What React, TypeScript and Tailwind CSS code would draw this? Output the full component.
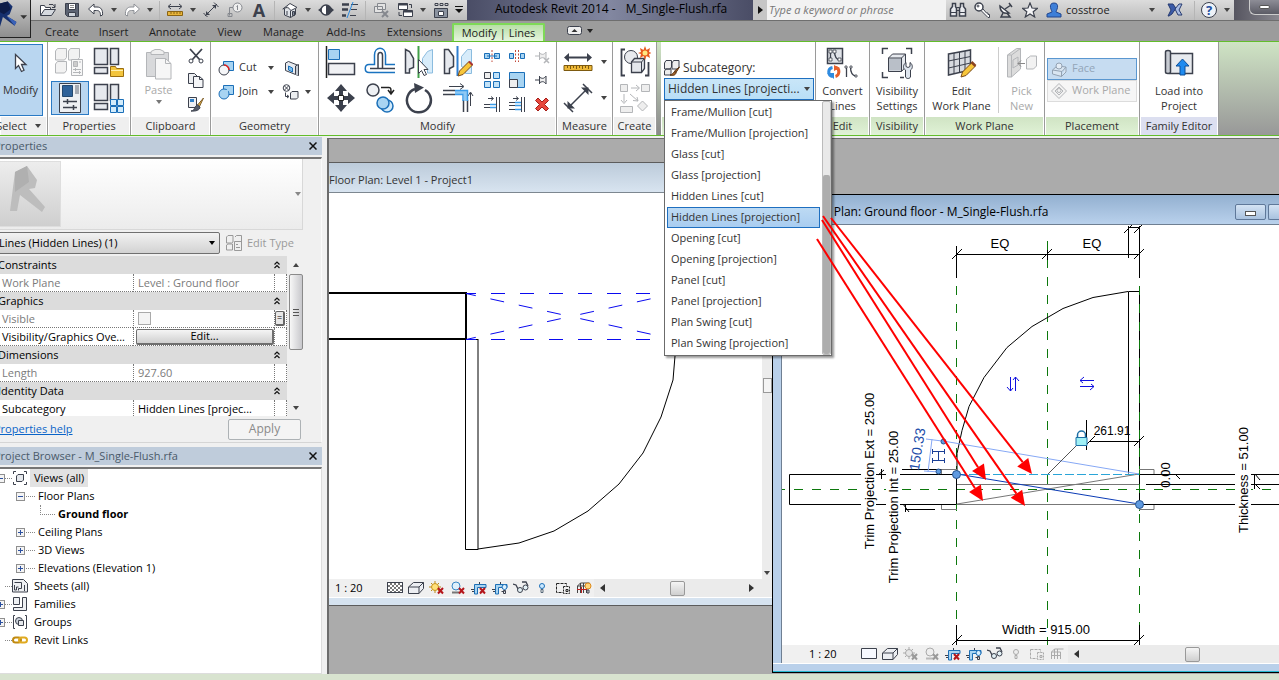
import React from 'react';

type Kids = { children?: React.ReactNode };

const D = '#3c414d';
const L = '#e6e9ee';
const B = '#1b6fb8';
const LB = '#a8d4f2';
const G = '#b4b6b9';

const Svg = ({ w = 16, h = 16, children }: Kids & { w?: number; h?: number }) => (
  <svg width={w} height={h} viewBox={`0 0 ${w} ${h}`} fill="none" stroke={D} className="block shrink-0" aria-hidden="true">
    {children}
  </svg>
);

const Caret = ({ color = '#444' }: { color?: string }) => (
  <svg width="6" height="4" viewBox="0 0 6 4" className="block shrink-0" aria-hidden="true">
    <path d="M0 0h6L3 4z" fill={color} />
  </svg>
);

const IconBtn = ({ label, className = '', children }: Kids & { label: string; className?: string }) => (
  <button type="button" aria-label={label} className={`flex shrink-0 items-center justify-center ${className}`}>
    {children}
  </button>
);

/* ---------- quick access icons ---------- */

const OpenIcon = () => (
  <Svg w={18}>
    <path d="M1.500 13.500v-10h4l1 2h5v2" fill="#fff" />
    <path d="M1.500 13.500l4-6h11l-4 6z" fill="#d5d9df" />
    <path d="M10 2.500h4l2 2.500M16 2v3.500h-3" />
  </Svg>
);
const SaveIcon = () => (
  <Svg>
    <path d="M1.500 1.500h13v13h-11l-2-2z" fill="#5c6372" />
    <path d="M4.500 1.500h7v6h-7z" fill="#fff" />
    <path d="M4.500 10.500h7v4h-7z" fill="#cfd4db" />
    <path d="M6 3.500h4M6 5.500h4" stroke="#888" />
  </Svg>
);
const UndoIcon = ({ gray = false }: { gray?: boolean }) => (
  <svg width="18" height="16" viewBox="0 0 18 16" className={gray ? 'block -scale-x-100' : 'block'} aria-hidden="true">
    <path d="M1.500 7L7 2v3h3c4 0 6 3 5.500 8l-2 1c0-4-1-5.500-4-5.500H7v3.500z" fill="#fff" stroke={gray ? '#8d9096' : D} />
  </svg>
);
const RulerIcon = ({ w = 16 }: { w?: number }) => (
  <Svg w={w} h={w === 16 ? 14 : 20}>
    {w === 16 ? (
      <>
        <path d="M2 3.500h12M4 1L1 3.500 4 6M12 1l3 2.500L12 6" />
        <path d="M.5 8.500h15v4H.5z" fill="#e8b53a" stroke="#8a6414" />
        <path d="M4 9v2M7 9v2M10 9v2M13 9v2" stroke="#8a6414" />
      </>
    ) : (
      <>
        <path d="M3 5.500h24" strokeWidth="2" />
        <path d="M6 1L1 5.500 6 10zM24 1l5 4.500-5 4.500z" fill={D} stroke="none" />
        <path d="M1 13.500h28v5H1z" fill="#edb837" stroke="#7d5a10" />
        <path d="M4.500 14v2M7.500 14v3M10.500 14v2M13.500 14v3M16.500 14v2M19.500 14v3M22.500 14v2M25.500 14v3" stroke="#7d5a10" />
      </>
    )}
  </Svg>
);
const DimIcon = () => (
  <Svg>
    <path d="M2 14L14 2M0.500 11l4 4M11 .5l4.500 4.500" />
    <path d="M3 9v4h4zM9 3h4v4z" fill={D} stroke="none" />
  </Svg>
);
const TagIcon = () => (
  <Svg>
    <circle cx="10.500" cy="5.500" r="4.500" stroke="#85888e" fill="#eee" />
    <path d="M9.500 4.500l1-1V8" stroke="#85888e" />
    <path d="M6 5.500H2.500v8M1 11.500h4v3H1z" stroke="#85888e" />
  </Svg>
);
const HouseIcon = () => (
  <Svg>
    <path d="M2.500 7v6l6 2.500 5-3V7" fill="#dfe3e8" />
    <path d="M.8 7L8 1.500 15 5.500 9 8.500 5.500 5z" fill="#fff" />
    <path d="M8.500 8.500v7M5 9v4" />
    <path d="M10.500 9.500h2v4h-2z" fill="#7d8797" />
  </Svg>
);
const SectionIcon = () => (
  <Svg>
    <circle cx="8" cy="8" r="5" fill="#fff" strokeWidth="1.500" />
    <path d="M3.500 5.500L0 8l3.500 2.500zM12.500 5L16 8l-3.500 3z" fill={D} stroke="none" />
    <path d="M8 3a5 5 0 010 10z" fill={D} stroke="none" />
  </Svg>
);
const ThinLinesIcon = () => (
  <Svg>
    <path d="M0 2.500h7M0 7.500h6M0 13.500h4" strokeWidth="2.500" />
    <path d="M9 2.500h7M9 7.500h6M8 13.500h6" />
    <path d="M11 0L5 16" stroke="#2b8be0" />
  </Svg>
);
const CloseHiddenIcon = () => (
  <Svg>
    <path d="M4.500 1.500h8v6h-8zM1.500 4.500h8v6h-8z" fill="#e3e3e3" stroke="#85888e" />
    <path d="M9 9l6 6M15 9l-6 6" stroke="#85888e" strokeWidth="2" />
  </Svg>
);
const SwitchIcon = () => (
  <Svg>
    <path d="M1.500 1.500h9v6h-9zM6.500 8.500h9v6h-9z" fill="#fff" />
    <path d="M1.500 2.500h9M6.500 9.500h9" strokeWidth="2" />
    <path d="M12 2.500h2.500V6M2 10v3.500h3" />
  </Svg>
);
const UiIcon = () => (
  <Svg>
    <path d="M2 1.500h3v2H2zM7 1.500h3v2H7zM12 1.500h3v2h-3z" />
    <path d="M1.500 6.500h13v9h-13z" fill="#8b93a0" />
    <path d="M5.500 9.500h5v4h-5z" fill="#fff" />
  </Svg>
);

/* ---------- info center icons ---------- */

const Binoculars = () => (
  <Svg w={18}>
    <path d="M3.500 1.500h3v3l1 2v7.500h-6V7l2-2.500zM11.500 1.500h3v3l2 2.500v7h-6V6.500l1-2z" fill="#e8eaee" strokeWidth="1.500" />
    <path d="M7.500 5.500h3v3h-3zM2 10.500h5M11 10.500h5" />
  </Svg>
);
const KeyIcon = () => (
  <Svg>
    <path d="M7 8.500l7 7h1.500v-3H14v-1.500h-1.500L9 7" fill="#fff" />
    <circle cx="5" cy="5" r="4" fill="#fff" strokeWidth="1.500" />
    <circle cx="4" cy="4" r="1" />
  </Svg>
);
const DishIcon = () => (
  <Svg>
    <path d="M2 4c0 6 4 8 9 7z" fill="#fff" strokeWidth="1.500" />
    <path d="M7 7l6-4M11 1l3 4M5 11l-2 4h9l-3-4" strokeWidth="1.500" />
  </Svg>
);
const StarIcon = () => (
  <Svg>
    <path d="M8 1l2 5 5.500.3-4.300 3.500 1.500 5.200L8 12l-4.700 3 1.500-5.200L.5 6.300 6 6z" fill="#f4f4f6" strokeWidth="1.200" />
  </Svg>
);
const UserIcon = () => (
  <Svg>
    <path d="M8 1c3 0 4 2 3.500 4.500C11 8 10 9 10 10l5 2v3H1v-3l5-2c0-1-1-2-1.500-4.500C4 3 5 1 8 1z" fill="#3e7fd8" stroke="#22468e" />
  </Svg>
);
const ExchangeIcon = () => (
  <Svg>
    <path d="M1 2h5l3 4.500L7 9 5 12l-3 2H1l3-6z" fill="#3a5aa8" stroke="#263a70" />
    <path d="M15 2h-3L8 7l3 6h4l-3-5z" fill="#a9bce4" stroke="#263a70" />
  </Svg>
);
const HelpIcon = () => (
  <svg width="18" height="18" viewBox="0 0 18 18" aria-hidden="true">
    <circle cx="9" cy="9" r="7.500" fill="#eef2f8" stroke={D} />
    <text x="9" y="13.500" textAnchor="middle" fontSize="13" fontWeight="700" fill="#1f4fa0">?</text>
  </svg>
);

/* ---------- ribbon icons ---------- */

const CursorIcon = () => (
  <Svg w={14} h={20}>
    <path d="M1.500 1.500v14l3-3 3 6 2.500-1.200L7.500 11.500h4.500z" fill="#fff" strokeWidth="1.300" />
  </Svg>
);
const TypePropsIcon = () => (
  <Svg w={32} h={30}>
    <path d="M1.500 4l2-2.500h9v9l-2 2.500h-9zM14.500 4l2-2.500h9v9l-2 2.500h-9zM1.500 17l2-2.500h9v9l-2 2.500h-9z" fill="#f2f2f2" stroke={G} />
    <path d="M17.500 12.500h11v16h-11z" fill="#f7f7f7" stroke={G} />
    <path d="M19.500 14.500h4v5h-4z" fill="#ccc" stroke={G} />
    <path d="M25 15h2M19 22.500h8M19 25.500h8M21.500 21v3M25.500 24v3" stroke={G} />
  </Svg>
);
const PropsIcon = () => (
  <Svg w={24} h={32}>
    <path d="M1.500 1.500h21v29h-21z" fill="#eef0f3" />
    <path d="M4.500 3.500h10v11h-10z" fill="#2f6299" stroke="#24496f" />
    <path d="M17 3h4v9h-4z" fill="#a6abb3" stroke="none" />
    <path d="M5 19.500h14M5 25.500h14M9.500 17v5M15.500 23v5" strokeWidth="1.500" />
  </Svg>
);
const Quad = () => (
  <path d="M1.500 1.500h13v16h-13zM17.500 1.500h8v16h-8zM1.500 20.500h13v6h-13z" fill={L} strokeWidth="1.500" />
);
const FamilyFolderIcon = () => (
  <Svg w={32} h={31}>
    <Quad />
    <path d="M17.500 19.500h5l1 2h7v8h-13z" fill="#f3c53d" stroke="#9a6d10" />
    <path d="M18 23.500h12" stroke="#fff0b0" />
  </Svg>
);
const FamilyTypesIcon = () => (
  <Svg w={32} h={31}>
    <Quad />
    <path d="M17.500 16.500h6v6h-6zM24.500 16.500h6v6h-6zM17.500 23.500h6v6h-6zM24.500 23.500h6v6h-6z" fill="#d3ecfb" stroke={B} />
  </Svg>
);
const PasteIcon = () => (
  <Svg w={28} h={32}>
    <path d="M1.500 4.500h22v24h-22z" fill="#d8d9db" stroke={G} />
    <path d="M6 6.500v-3l4-2h5l4 2v3z" fill="#eee" stroke={G} />
    <path d="M10.500 10.500h10l5.500 5v15.500H10.500z" fill="#f6f6f6" stroke={G} />
    <path d="M20.500 10.500v5H26" stroke={G} />
  </Svg>
);
const CutIcon = () => (
  <Svg>
    <path d="M2 1l10 11M14 1L4 12" strokeWidth="1.800" />
    <circle cx="3" cy="13" r="2" fill="#fff" />
    <circle cx="13" cy="13" r="2" fill="#fff" />
  </Svg>
);
const CopyIcon = () => (
  <Svg>
    <path d="M.5 1.500h6l3 3v7h-9z" fill="#eceef1" />
    <path d="M5.500 4.500h6l3.500 3v8H5.500z" fill="#f5f6f8" />
    <path d="M11.500 4.500v3H15" />
  </Svg>
);
const MatchIcon = () => (
  <Svg>
    <path d="M.5 1.500h8v10h-8z" fill="#eef0f3" />
    <path d="M2 3h4v3H2z" fill="#2f80c8" stroke="none" />
    <path d="M15.500 2l-6 7 2 1.500z" fill="#e0b04a" stroke="#80602a" />
    <path d="M3 15c4 0 3-5 6.500-6l2.500 2c0 3-4 4.500-9 4z" fill="#555b68" />
  </Svg>
);
const CutGeomIcon = () => (
  <Svg>
    <path d="M5.500 1.500h10v9h-10z" fill={LB} stroke={B} />
    <circle cx="6" cy="10" r="5" fill="#f5f6f8" stroke={D} />
    <path d="M6 5a5 5 0 015 5" stroke="#e02020" strokeWidth="1.500" />
  </Svg>
);
const JoinGeomIcon = () => (
  <Svg>
    <path d="M5.500 1.500h10v9h-10z" fill={LB} stroke={B} />
    <circle cx="6" cy="10" r="5" fill={LB} stroke={B} />
    <path d="M6 6h4v4H6z" fill={LB} stroke="none" />
  </Svg>
);
const WallOpeningIcon = () => (
  <Svg>
    <path d="M1.500 3l3-1.500 10 4v10l-3-1-10-4z" fill={L} />
    <path d="M11.500 14.500V6l3-1.500v11" fill="#c3c9d1" />
    <path d="M4.500 6l4 2v4l-4-2z" fill="#7cc0f0" stroke={B} />
  </Svg>
);
const PaintIcon = () => (
  <Svg w={18}>
    <circle cx="4.500" cy="4" r="3.300" />
    <path d="M2.500 2l4 4M6.500 2l-4 4M3.500 8.500v4h3M5 11l2 1.500L5 14" />
    <path d="M8.500 9l1.500-1.500h6v6L14.500 15h-6z" fill="#eceef1" />
  </Svg>
);
const AlignIcon = () => (
  <Svg w={31} h={32}>
    <path d="M1.500 0v32" stroke="#222" strokeWidth="1.500" />
    <path d="M3.500 3.500h11v10h-11z" fill={LB} stroke={B} />
    <path d="M3.500 17.500h26v11h-26z" fill="#f0f1f4" strokeWidth="1.500" />
  </Svg>
);
const OffsetIcon = () => (
  <Svg w={32} h={32}>
    <path d="M31 26.500H5c-5 0-5-8 0-8h5.500V9c0-9 11-9 11 0v9.500H31" stroke="#1a73c0" strokeWidth="1.500" />
    <path d="M31 22.500H6M14 22V9.500c0-4 4.500-4 4.500 0V22" strokeWidth="1.500" />
  </Svg>
);
const MirrorPickIcon = () => (
  <Svg w={30} h={32}>
    <path d="M1.500 3.500l4 2 4 7v9l-4 1.500v4h-4z" fill={L} strokeWidth="1.500" />
    <path d="M28.500 3.500l-5 2-5 7v9l5 1.500v4h5z" fill="#d7ecfa" stroke="#8bbcdf" />
    <path d="M14.500 0v32" stroke="#41a048" strokeWidth="2" />
    <path d="M14.500 13.500v14l3-3 2.500 5 2.500-1-2.500-5h4z" fill="#fff" />
  </Svg>
);
const MirrorDrawIcon = () => (
  <Svg w={30} h={32}>
    <path d="M1.500 3.500h4l5 7v10l-4 2v5h-5z" fill={L} strokeWidth="1.500" />
    <path d="M28.500 3.500h-4l-6 7v10l4 2v5h6z" fill="#d7ecfa" stroke="#8bbcdf" />
    <path d="M14.500 0v30" stroke="#2f7fd0" strokeWidth="2" />
    <path d="M15 30l1.500-5L26 15.500l3.500 3.500L20 28.500z" fill="#f7c63a" stroke="#7b4a18" />
    <path d="M26 15.500l3.500 3.500" stroke="#a33" strokeWidth="2" />
  </Svg>
);
const MoveIcon = () => (
  <Svg w={32} h={32}>
    <path d="M16 2l6 7h-4v5h-4V9h-4zM16 30l6-7h-4v-5h-4v5h-4zM2 16l7-6v4h5v4H9v4zM30 16l-7-6v4h-5v4h5v4z" fill={D} stroke="none" />
    <path d="M13.500 13.500h5v5h-5z" fill="#fff" stroke="#222" />
  </Svg>
);
const CopyRoundIcon = () => (
  <Svg w={30} h={32}>
    <circle cx="8" cy="8" r="6" fill="#eef0f3" strokeWidth="1.500" />
    <path d="M16 5.500h8c2 0 2 1 2 6M23 8l3 4 3-4" stroke="#222" strokeWidth="1.500" />
    <circle cx="22" cy="24" r="6" fill="#d3ebfb" stroke={B} strokeWidth="1.500" />
    <circle cx="18" cy="21" r="6" fill={LB} stroke={B} strokeWidth="1.500" />
  </Svg>
);
const RotateIcon = () => (
  <Svg w={28} h={32}>
    <path d="M20 8a12 12 0 11-10-1" strokeWidth="2.500" />
    <path d="M9 1l10 4.500L10 11z" fill={D} stroke="none" />
  </Svg>
);
const TrimIcon = () => (
  <Svg w={32} h={32}>
    <path d="M7 4.500h14M18 1.500l4 3-4 3M28.500 24V11M26 14l2.500-4 2.500 4" />
    <path d="M1 8.500h12M1 12.500h12M21.500 30V18M25.500 30V18" strokeWidth="1.500" />
    <path d="M13 10.500h10.500V19" stroke="#8fc9f4" strokeWidth="3" />
    <path d="M13 8.500h12.500V19M13 12.500h8V19" stroke="#3a9be8" strokeWidth="1.500" />
  </Svg>
);
const SplitIcon = ({ gap = false }: { gap?: boolean }) => (
  <Svg>
    <path d={gap ? 'M.5 5.500h4v5h-4zM11.500 5.500h4v5h-4z' : 'M.5 5.500h5v5h-5zM10.500 5.500h5v5h-5z'} fill={LB} stroke={B} />
    <path d={gap ? 'M6.500 2v12M9.500 2v12' : 'M8 2v12'} stroke="#c24a3a" strokeDasharray="2 1.500" />
    {!gap && <path d="M3 8h10" stroke={B} />}
  </Svg>
);
const PinIcon = ({ gray = false }: { gray?: boolean }) => (
  <Svg>
    <path d="M1 8h4M5.500 4v8M6 5.500c3 1.500 4 1 6-1.500v8c-2-2.500-3-3-6-1.500" stroke={gray ? G : D} fill="#eee" />
    {gray && <path d="M10 10l5 5M15 10l-5 5" stroke={G} strokeWidth="1.500" />}
  </Svg>
);
const ArrayIcon = () => (
  <Svg>
    <path d="M.5.500h6v6h-6z" fill="#eee" />
    <path d="M9.500.500h6v6h-6zM.5 9.500h6v6h-6zM9.500 9.500h6v6h-6z" fill="#c2e2f8" stroke={B} />
  </Svg>
);
const ScaleIcon = () => (
  <Svg>
    <path d="M.5.500h15v15H.5z" fill={LB} stroke={B} />
    <path d="M.5 7.500h8v8h-8z" fill="#eee" />
  </Svg>
);
const TrimOneIcon = ({ multi = false }: { multi?: boolean }) => (
  <Svg>
    <path d="M4 2.500h5M7 .5l2.500 2L7 4.500" />
    <path d={multi ? 'M0 6.500h7M0 9.500h7M0 13.500h7' : 'M0 8.500h7M0 11.500h7'} />
    <path d={multi ? 'M6 6.500h6M6 9.500h6M6 13.500h6' : 'M6 8.500h6M6 11.500h6'} stroke="#3a9be8" strokeWidth="1.500" />
    <path d="M12.500 1v15M15.500 1v15" />
  </Svg>
);
const DeleteIcon = () => (
  <Svg>
    <path d="M4 2l4 4 4-4 2.500 2.500L10.500 8.500l4 4L12 15l-4-4-4 4-2.500-2.500 4-4-4-4z" fill="#e8473c" stroke="#a51d17" />
  </Svg>
);
const MeasureLineIcon = () => (
  <Svg w={30} h={30}>
    <path d="M5 25L25 5M1 20l9 9M20 1l9 9" strokeWidth="1.500" />
    <path d="M4.500 18v7.500H12zM18 4.500h7.500V12z" fill={D} stroke="none" />
  </Svg>
);
const CreateSimilarIcon = () => (
  <Svg w={32} h={32}>
    <path d="M6 3.500H2.500v26H6M26 29.500h3.500V16" strokeWidth="1.800" />
    <circle cx="12" cy="11" r="6.500" fill="#e8eaee" />
    <path d="M12.500 16l3-3.500h10v10l-3 4h-10z" fill="#e4e7ec" strokeWidth="1.300" />
    <path d="M12.500 16h10v10.500M22.500 16l3-3.500" />
    <path d="M26 0l1.500 4L31 2l-1 4 3 1-3 1 1 4-3.500-2L26 14l-1.500-4L21 12l1-4-3-1 3-1-1-4 3.500 2z" fill="#e8591c" stroke="none" />
    <circle cx="26" cy="7" r="2.500" fill="#ffe680" stroke="none" />
  </Svg>
);
const AssemblyIcon = () => (
  <Svg w={32} h={30}>
    <path d="M1.500 1.500h7v7h-7zM22.500 1.500h8v7h-8zM1.500 23.500h12v6h-12zM23.500 18l5 5-5 5-5-5z" fill="#eee" stroke={G} />
    <path d="M12 5h8M17 2l3.500 3L17 8M5 11v8M2 17l3 3.500L8 17M11 11l8 7M18 14l1 4-5-.5" stroke={G} />
  </Svg>
);
const SubcatIcon = () => (
  <Svg>
    <path d="M.5 3L2 .5h5.500V7L6 9H.5zM8 3L9.500.500H15V7L13.500 9H8zM.5 11L2 9h5v6H.5z" fill="#eee" />
    <path d="M15.500 7l-5 4 1.500 1.500zM6 15c3 0 3-3 5-3.500l1 1C12 15 9 16 6 15z" fill="#a4632c" stroke="#5c3512" />
  </Svg>
);
const ConvertIcon = () => (
  <Svg w={32} h={32}>
    <path d="M1.500 1.500h15v15h-15z" fill="#e0e3e8" strokeWidth="1.500" />
    <path d="M4.500 4v9M8.500 4c0 5 1 8 5 9M20.500 20v10M24.500 20c0 5 1 8 5 9" strokeWidth="1.300" />
    <path d="M3 3h3v3H3zM7 3h3v3H7zM3 11h3v3H3zM12 11h3v3h-3zM19 19h2v2h-2zM24 19h2v2h-2zM29 28h2v2h-2z" fill="#fff" strokeWidth=".8" />
    <path d="M6.500 20.500c-5 1-5 8 0 9" stroke="#2f8be0" strokeWidth="3" />
    <path d="M9.500 20.500c5 1 4 8 0 9" stroke="#e8602a" strokeWidth="3" />
    <path d="M1 26h7v6z" fill="#2f8be0" stroke="none" />
    <path d="M8 18v6l6-3z" fill="#e8602a" stroke="none" />
  </Svg>
);
const VisibilityIcon = () => (
  <Svg w={32} h={32}>
    <path d="M7 1.500H1.500V7M25 1.500h5.500V7M7 30.500H1.500V25M19 30.500h4" strokeWidth="1.500" />
    <path d="M7.500 11l4-4h13v13l-4 4.500h-13z" fill={L} />
    <path d="M8 11.500h12v12H8z" fill="#b9bfc8" stroke="none" />
    <path d="M7.500 11h13v13.500M20.500 11l4-4" />
    <path d="M25 15.500v4l2 1 2-1v-4c3 2 3 6 .5 7.500v7c-1 2-4 2-5 0v-7c-3-1.500-2.500-5.500.5-7.500z" fill="#dfe6ef" />
  </Svg>
);
const EditPlaneIcon = () => (
  <Svg w={32} h={32}>
    <path d="M2.500 7l22-4v20l-22 5z" fill="#d8dbe0" strokeWidth="1.500" />
    <path d="M8 6v21M13.500 5v20.500M19 4v20M2.500 14l22-4.500M2.500 21l22-5" />
    <path d="M15 30l1.500-5L26 15.500l3.500 3.500L20 28.500z" fill="#f7c63a" stroke="#7b4a18" />
    <path d="M25.500 15l4 4" stroke="#8a4320" strokeWidth="2.500" />
  </Svg>
);
const PickNewIcon = () => (
  <Svg w={32} h={32}>
    <path d="M1.500 8l9-6.500h4V22l-9 8h-4z" fill="#dcdcdc" stroke={G} />
    <path d="M5.500 8l9-6.500M1.500 8h4v22M7 13l5-3v8l-5 3z" stroke={G} />
    <path d="M12 16.500h7M15 13.500l-3 3 3 3" stroke="#888" />
    <path d="M20.500 12l4-3h6v10l-3 3h-7z" fill="#f2f2f2" stroke={G} />
  </Svg>
);
const FaceIcon = () => (
  <Svg>
    <path d="M1.500 9L6 5l9 1-4 4.500zM1.500 9v4l9 2.500v-5M15 6v5l-4.500 4.500" stroke="#93a2b3" fill="#d9e6f2" />
    <circle cx="8" cy="5" r="3" stroke="#93a2b3" fill="#e4edf6" />
  </Svg>
);
const PlaneIcon = () => (
  <Svg>
    <path d="M8 .5L15.500 8 8 15.500.5 8z" fill="#f2f2f2" stroke={G} />
    <path d="M8 4l4 4-4 4-4-4z" stroke={G} />
    <circle cx="8" cy="7.500" r="2" stroke={G} />
  </Svg>
);
const LoadIcon = () => (
  <Svg w={30} h={28}>
    <path d="M5.500 4.500h23v20h-23z" fill="#e7eaee" strokeWidth="1.500" />
    <path d="M1.500 3c0-2 5-2 5 0v20c0 2-5 2-5 0z" fill="#c7cbd2" strokeWidth="1.500" />
    <path d="M18.500 10l6.500 7h-4v9h-5v-9h-4z" fill="#1f8bf0" stroke="#0d4f99" />
  </Svg>
);

/* ---------- view control bar icons ---------- */

const BoxIcon = ({ hatch = false }: { hatch?: boolean }) => (
  <Svg h={14}>
    <path d="M.5 1.500h15v10H.5z" fill={hatch ? '#777' : '#f7f9ff'} />
    {hatch && (
      <>
        <path d="M1 3h14M1 7h14M1 11h14" stroke="#fff" strokeDasharray="2 2" strokeWidth="2" />
        <path d="M3 5h12M3 9h12" stroke="#fff" strokeDasharray="2 2" strokeWidth="2" />
        <path d="M.5 1.500h15v10H.5z" />
      </>
    )}
  </Svg>
);
const CubeIcon = () => (
  <Svg h={14}>
    <path d="M.5 6l5-4.500h10v6L11 12.500H.5z" fill="#eceef2" />
    <path d="M.5 6H11v6.500M11 6l4.500-4.500" />
  </Svg>
);
const RedX = ({ gray = false }: { gray?: boolean }) => (
  <path d="M9 7l5 5.500M14 7l-5 5.500" stroke={gray ? '#999' : '#b5161b'} strokeWidth="2" />
);
const SunIcon = ({ gray = false }: { gray?: boolean }) => (
  <Svg h={14}>
    <path d="M6 0v12M0 6h12M2 2l8 8M10 2l-8 8" stroke={gray ? '#aaa' : '#b98a1b'} />
    <circle cx="6" cy="6" r="3.500" fill={gray ? '#e5e5e5' : '#ffe07a'} stroke={gray ? '#aaa' : '#c9951e'} />
    <RedX gray={gray} />
  </Svg>
);
const ShadowIcon = ({ gray = false }: { gray?: boolean }) => (
  <Svg h={14}>
    <circle cx="6" cy="5" r="4" fill={gray ? '#eee' : '#dff0fb'} stroke={gray ? '#aaa' : '#3a86c4'} />
    <path d="M2 11.500h7" stroke={gray ? '#bbb' : '#777'} strokeWidth="2" />
    <RedX gray={gray} />
  </Svg>
);
const CropIcon = ({ bulb = false }: { bulb?: boolean }) => (
  <Svg h={14}>
    <path d="M3.500 13V3.500H15v3H6.500V13z" fill={LB} stroke="#1d6fb5" />
    <path d="M0 8.500h3M1 10.500h2M8.500 1v2M9.500 10.500h3" />
    {bulb ? (
      <>
        <circle cx="12.500" cy="6" r="2.500" fill="#d9f0ff" stroke={B} />
        <path d="M11.500 9.500h2v3h-2z" />
      </>
    ) : (
      <RedX />
    )}
  </Svg>
);
const GlassesIcon = () => (
  <Svg h={14}>
    <path d="M0 3l3 1 3 6M9 1h4l2 4" strokeWidth="1.300" />
    <circle cx="7" cy="9" r="2.500" fill="#e4f1f6" />
    <circle cx="12.500" cy="6.500" r="2.500" fill="#e4f1f6" />
  </Svg>
);
const BulbIcon = ({ gray = false }: { gray?: boolean }) => (
  <Svg h={14}>
    <circle cx="8" cy="5" r="2.500" fill={gray ? '#eee' : '#cbe9ff'} stroke={gray ? '#aaa' : B} />
    <path d="M7 8.500h2v3H7z" stroke={gray ? '#aaa' : '#567'} />
  </Svg>
);
const TempViewIcon = ({ gray = false }: { gray?: boolean }) => (
  <Svg h={14}>
    <path d="M1.500 2.500h10v9h-10z" stroke={gray ? '#aaa' : '#222'} strokeDasharray="3 1" />
    <path d="M8.500 5.500h6v7h-6z" fill="#eee" stroke={gray ? '#aaa' : '#222'} strokeDasharray="2 1" />
    <path d="M11 8.500h2v2h-2z" stroke={gray ? '#aaa' : '#222'} />
  </Svg>
);
const AnalyticIcon = ({ gray = false }: { gray?: boolean }) => (
  <Svg h={14}>
    <path d="M1.500 12V5l3-3h9M1.500 5h9v7M4.500 12V2M7.500 12V2M1 8.500h10" stroke={gray ? '#aaa' : '#444'} />
    {!gray && (
      <>
        <path d="M1 8.500h10M5.500 6v6" stroke="#c02020" />
        <circle cx="12" cy="5" r="3" fill="#ffd57a" stroke="#dd8a1b" />
        <path d="M11 9h2v3h-2z" />
      </>
    )}
  </Svg>
);

/* ---------- header ---------- */

const Sep = () => (
  <span className="flex w-[7px] shrink-0 justify-center">
    <span className="h-[19px] w-px bg-[#b5b5b5]" />
  </span>
);

const QuickAccess = () => (
  <div className="flex shrink-0 items-center bg-linear-to-b from-[#dcdcdc] to-[#bdbdbd] pr-[2px] pl-9">
    <IconBtn label="Open" className="w-6"><OpenIcon /></IconBtn>
    <IconBtn label="Save" className="w-6"><SaveIcon /></IconBtn>
    <IconBtn label="Undo" className="w-6"><UndoIcon /></IconBtn>
    <IconBtn label="Undo list" className="w-3"><Caret /></IconBtn>
    <IconBtn label="Redo" className="w-6"><UndoIcon gray /></IconBtn>
    <IconBtn label="Redo list" className="w-3"><Caret /></IconBtn>
    <Sep />
    <IconBtn label="Measure" className="w-6"><RulerIcon /></IconBtn>
    <IconBtn label="Measure options" className="w-3"><Caret /></IconBtn>
    <IconBtn label="Aligned dimension" className="w-6"><DimIcon /></IconBtn>
    <IconBtn label="Tag by category" className="w-6"><TagIcon /></IconBtn>
    <IconBtn label="Text" className="w-6 text-[18px] leading-5 font-bold text-[#3c414d]">A</IconBtn>
    <Sep />
    <IconBtn label="Default 3D view" className="w-6"><HouseIcon /></IconBtn>
    <IconBtn label="3D view options" className="w-3"><Caret /></IconBtn>
    <IconBtn label="Section" className="w-6"><SectionIcon /></IconBtn>
    <IconBtn label="Thin lines" className="w-6"><ThinLinesIcon /></IconBtn>
    <Sep />
    <IconBtn label="Close hidden windows" className="w-6"><CloseHiddenIcon /></IconBtn>
    <IconBtn label="Switch windows" className="w-6"><SwitchIcon /></IconBtn>
    <IconBtn label="Window list" className="w-3"><Caret /></IconBtn>
    <IconBtn label="User interface" className="w-6"><UiIcon /></IconBtn>
    <IconBtn label="Customize" className="w-3">
      <Svg w={8} h={8}>
        <path d="M0 .5h8" stroke="#111" />
        <path d="M0 3h8L4 7z" fill="#111" stroke="none" />
      </Svg>
    </IconBtn>
  </div>
);

const InfoCenter = () => (
  <div className="flex w-[288px] shrink-0 items-center bg-linear-to-b from-[#dcdcdc] to-[#bdbdbd]">
    <IconBtn label="Search" className="w-6"><Binoculars /></IconBtn>
    <IconBtn label="Subscription" className="w-6"><KeyIcon /></IconBtn>
    <IconBtn label="Communication" className="w-6"><DishIcon /></IconBtn>
    <IconBtn label="Favorites" className="w-6"><StarIcon /></IconBtn>
    <button type="button" className="flex flex-1 items-center gap-1 pr-1 pl-1 text-[#222]">
      <UserIcon />
      <span className="flex-1 text-left">cosstroe</span>
      <Caret />
    </button>
    <IconBtn label="Exchange apps" className="w-8"><ExchangeIcon /></IconBtn>
    <Sep />
    <IconBtn label="Help" className="w-[22px]"><HelpIcon /></IconBtn>
    <IconBtn label="Help menu" className="w-[14px]"><Caret /></IconBtn>
  </div>
);

const TitleBar = () => (
  <div className="flex h-[21px] border-b border-[#6e6e6e]">
    <QuickAccess />
    <div className="flex min-w-0 flex-1 items-center gap-[10px] overflow-hidden bg-linear-to-r from-[#4a4d66] via-[#8287a0] to-[#4a4d66] pb-[3px] pl-7 text-[12px] whitespace-nowrap text-black">
      <span>Autodesk Revit 2014 -</span>
      <span>M_Single-Flush.rfa</span>
    </div>
    <IconBtn label="Collapse search" className="w-[14px] bg-[#c6c6c6]">
      <Svg w={5} h={8}><path d="M0 0l5 4-5 4z" fill="#111" stroke="none" /></Svg>
    </IconBtn>
    <input
      aria-label="Search"
      placeholder="Type a keyword or phrase"
      className="w-[179px] shrink-0 bg-[#f2f2f2] px-[2px] text-[11px] italic outline-none placeholder:text-[#777]"
    />
    <InfoCenter />
    <div className="flex w-[45px] shrink-0 justify-end bg-linear-to-r from-[#565560] to-[#8a8990]">
      <button type="button" aria-label="Minimize" className="flex h-[15px] w-[30px] items-center justify-center rounded-bl-md border border-t-0 border-r-0 border-[#ccc] bg-linear-to-b from-[#8d8d96] to-[#5c5c66]">
        <span className="h-1 w-[11px] rounded-xs border border-[#555] bg-white" />
      </button>
    </div>
  </div>
);

const tabs = [
  { name: 'Create', width: 'w-[54px]' },
  { name: 'Insert', width: 'w-[49px]' },
  { name: 'Annotate', width: 'w-[69px]' },
  { name: 'View', width: 'w-[45px]' },
  { name: 'Manage', width: 'w-[63px]' },
  { name: 'Add-Ins', width: 'w-[62px]' },
  { name: 'Extensions', width: 'w-[75px]' },
];

const TabRow = () => (
  <nav className="flex h-5 items-end bg-[#9c9c9c] pl-[35px] text-[#222]">
    {tabs.map((t) => (
      <button key={t.name} type="button" className={`h-[18px] shrink-0 text-center ${t.width}`}>
        {t.name}
      </button>
    ))}
    <button type="button" className="h-[18px] w-[93px] shrink-0 rounded-t-xs border-2 border-b-0 border-[#7ed957] bg-linear-to-b from-[#b8dfa6] to-[#e6f5de] leading-4">
      Modify | Lines
    </button>
    <button type="button" aria-label="Ribbon display" className="ml-[22px] flex h-5 items-center gap-1">
      <Svg w={16} h={10}>
        <rect x=".5" y=".5" width="14" height="8" rx="2" fill="#eee" />
        <path d="M4.500 6h6l-3-3z" fill="#333" stroke="none" />
      </Svg>
      <Caret color="#222" />
    </button>
  </nav>
);

/* ---------- ribbon ---------- */

const Panel = ({ title, width, tone = 'bg-[#efefef]', children }: Kids & { title: React.ReactNode; width: string; tone?: string }) => (
  <section className={`flex shrink-0 flex-col border-r border-[#9a9a9a] bg-white ${width}`}>
    <div className="flex flex-1 items-center justify-center">{children}</div>
    <div className={`mx-px flex h-[18px] items-center justify-center gap-2 leading-4 whitespace-nowrap ${tone}`}>{title}</div>
  </section>
);

const green = 'bg-linear-to-b from-[#d0e4c4] to-[#e0f2d6]';

const BigBtn = ({ icon, lines, gray = false }: { icon: React.ReactNode; lines: string[]; gray?: boolean }) => (
  <button type="button" disabled={gray} className={`flex flex-col items-center leading-[15px] whitespace-nowrap ${gray ? 'text-[#a9a9a9]' : ''}`}>
    <span className="mb-1 flex h-8 items-center">{icon}</span>
    {lines.map((l) => (
      <span key={l}>{l}</span>
    ))}
  </button>
);

const options = [
  'Frame/Mullion [cut]',
  'Frame/Mullion [projection]',
  'Glass [cut]',
  'Glass [projection]',
  'Hidden Lines [cut]',
  'Hidden Lines [projection]',
  'Opening [cut]',
  'Opening [projection]',
  'Panel [cut]',
  'Panel [projection]',
  'Plan Swing [cut]',
  'Plan Swing [projection]',
];

const SubcategoryList = () => (
  <div className="absolute top-full left-0 z-30 flex h-[256px] w-[168px] border border-[#6b6b6b] bg-white shadow-[2px_2px_2px_rgba(0,0,0,0.4)]">
    <ul role="listbox" aria-label="Subcategories" className="flex-1 pt-px pl-[2px] text-[#333]">
      {options.map((o) => {
        const on = o === 'Hidden Lines [projection]';
        return (
          <li
            key={o}
            role="option"
            aria-selected={on}
            className={`flex h-[21px] items-center border pl-[3px] whitespace-nowrap ${on ? 'border-[#1e6fc0] bg-linear-to-b from-[#bddaf3] to-[#a9cdf0]' : 'border-transparent'}`}
          >
            {o}
          </li>
        );
      })}
    </ul>
    <div className="ml-[2px] w-[9px] rounded-xs border border-[#bbb] bg-[#e9e9e9] pt-[73px]">
      <div className="h-full rounded-xs bg-[#adadad]" />
    </div>
  </div>
);

const Ribbon = () => (
  <div className="flex h-[95px] border-y border-[#62bd2b] bg-linear-to-b from-[#cfe4c4] to-[#989898] text-[#333]">
    <Panel width="w-12" title={<><span className="-ml-[10px]">Select</span><Caret /></>}>
      <button type="button" className="-ml-[10px] flex h-[72px] w-12 flex-col items-center border border-[#2a7ac4] bg-[#b9d6f0] pt-2 pl-1">
        <CursorIcon />
        <span className="pt-[9px]">Modify</span>
      </button>
    </Panel>
    <Panel width="w-[83px]" title="Properties">
      <div className="grid grid-cols-[38px_38px] grid-rows-[36px_34px] gap-px">
        <IconBtn label="Type properties"><TypePropsIcon /></IconBtn>
        <IconBtn label="Family category"><FamilyFolderIcon /></IconBtn>
        <IconBtn label="Properties" className="border border-[#2a7ac4] bg-[#b9d6f0]"><PropsIcon /></IconBtn>
        <IconBtn label="Family types"><FamilyTypesIcon /></IconBtn>
      </div>
    </Panel>
    <Panel width="w-20" title="Clipboard">
      <div className="flex h-[72px] w-full pr-1">
        <button type="button" disabled className="flex flex-1 flex-col items-center text-[#a9a9a9]">
          <span className="pt-1"><PasteIcon /></span>
          <span className="leading-5">Paste</span>
          <Caret color="#777" />
        </button>
        <div className="flex flex-col">
          <IconBtn label="Cut to clipboard" className="h-6 w-5"><CutIcon /></IconBtn>
          <IconBtn label="Copy to clipboard" className="h-6 w-5"><CopyIcon /></IconBtn>
          <IconBtn label="Match type" className="h-6 w-5"><MatchIcon /></IconBtn>
        </div>
      </div>
    </Panel>
    <Panel width="w-[108px]" title="Geometry">
      <div className="grid w-full grid-cols-[60px_36px] gap-x-1 pl-[7px]">
        <button type="button" className="flex h-6 items-center gap-[5px]"><CutGeomIcon /><span className="w-6 text-left">Cut</span><Caret /></button>
        <IconBtn label="Wall opening" className="h-6 w-5"><WallOpeningIcon /></IconBtn>
        <button type="button" className="flex h-6 items-center gap-[5px]"><JoinGeomIcon /><span className="w-6 text-left">Join</span><Caret /></button>
        <button type="button" aria-label="Paint" className="flex h-6 items-center gap-[5px]"><PaintIcon /><Caret /></button>
      </div>
    </Panel>
    <Panel width="w-[238px]" title="Modify">
      <div className="grid grid-cols-[39px_39px_39px_39px] grid-rows-[36px_36px]">
        <IconBtn label="Align"><AlignIcon /></IconBtn>
        <IconBtn label="Offset"><OffsetIcon /></IconBtn>
        <IconBtn label="Mirror pick axis"><MirrorPickIcon /></IconBtn>
        <IconBtn label="Mirror draw axis"><MirrorDrawIcon /></IconBtn>
        <IconBtn label="Move"><MoveIcon /></IconBtn>
        <IconBtn label="Copy"><CopyRoundIcon /></IconBtn>
        <IconBtn label="Rotate"><RotateIcon /></IconBtn>
        <IconBtn label="Trim to corner"><TrimIcon /></IconBtn>
      </div>
      <div className="ml-[2px] grid grid-cols-[25px_25px_25px] grid-rows-[24px_24px_24px]">
        <IconBtn label="Split element"><SplitIcon /></IconBtn>
        <IconBtn label="Split with gap"><SplitIcon gap /></IconBtn>
        <IconBtn label="Unpin"><PinIcon gray /></IconBtn>
        <IconBtn label="Array"><ArrayIcon /></IconBtn>
        <IconBtn label="Scale"><ScaleIcon /></IconBtn>
        <IconBtn label="Pin"><PinIcon /></IconBtn>
        <IconBtn label="Trim single"><TrimOneIcon /></IconBtn>
        <IconBtn label="Trim multiple"><TrimOneIcon multi /></IconBtn>
        <IconBtn label="Delete"><DeleteIcon /></IconBtn>
      </div>
    </Panel>
    <Panel width="w-14" title="Measure">
      <div className="flex flex-col">
        <button type="button" aria-label="Measure between" className="flex h-9 items-center gap-2"><RulerIcon w={30} /><Caret /></button>
        <button type="button" aria-label="Dimension" className="flex h-9 items-center gap-2"><MeasureLineIcon /><Caret /></button>
      </div>
    </Panel>
    <Panel width="w-11" title="Create">
      <div className="flex flex-col gap-[5px]">
        <IconBtn label="Create similar"><CreateSimilarIcon /></IconBtn>
        <IconBtn label="Create group"><AssemblyIcon /></IconBtn>
      </div>
    </Panel>
    <div className="w-1 shrink-0 bg-linear-to-b from-[#cfe4c4] to-[#8a8a8a]" />
    <Panel width="w-[155px]" tone={green} title="">
      <div className="flex flex-1 flex-col pr-px pb-[2px] pl-[3px]">
        <label htmlFor="subcat" className="flex h-5 items-center gap-[3px] text-[12px]"><SubcatIcon />Subcategory:</label>
        <div className="relative">
          <select id="subcat" className="block h-[22px] w-full appearance-none border border-[#1e6fc0] bg-linear-to-b from-[#c9e6f8] to-[#b9dff7] pl-[3px] text-[12px] outline-none">
            <option>Hidden Lines [projecti...</option>
          </select>
          <span className="pointer-events-none absolute top-[9px] right-1"><Caret /></span>
          <SubcategoryList />
        </div>
      </div>
    </Panel>
    <Panel width="w-[54px]" tone={green} title="Edit"><BigBtn icon={<ConvertIcon />} lines={['Convert', 'Lines']} /></Panel>
    <Panel width="w-[55px]" tone={green} title="Visibility"><BigBtn icon={<VisibilityIcon />} lines={['Visibility', 'Settings']} /></Panel>
    <Panel width="w-[120px]" tone={green} title="Work Plane">
      <div className="flex w-full">
        <div className="flex w-[74px] justify-center border-r border-[#ccc]"><BigBtn icon={<EditPlaneIcon />} lines={['Edit', 'Work Plane']} /></div>
        <div className="flex flex-1 justify-center"><BigBtn gray icon={<PickNewIcon />} lines={['Pick', 'New']} /></div>
      </div>
    </Panel>
    <Panel width="w-[95px]" tone={green} title="Placement">
      <div className="flex w-[90px] flex-col text-[#a9a9a9]">
        <button type="button" disabled className="flex h-[22px] items-center gap-[5px] border border-[#5a97d0] bg-[#c6dcf1] pl-[3px] text-[#93a5b8]"><FaceIcon />Face</button>
        <button type="button" disabled className="flex h-[22px] items-center gap-[5px] border border-[#dcdcdc] bg-[#f6f6f6] pl-[3px] whitespace-nowrap"><PlaneIcon />Work Plane</button>
      </div>
    </Panel>
    <Panel width="w-[79px]" tone="bg-[#dcdff0]" title="Family Editor"><BigBtn icon={<LoadIcon />} lines={['Load into', 'Project']} /></Panel>
  </div>
);

const AppButton = () => (
  <button type="button" aria-label="Application menu" className="absolute top-0 left-0 z-10 flex h-[38px] w-[31px] overflow-hidden border-r border-b border-[#222] bg-linear-to-b from-[#c9c9c9] to-[#8f8f8f]">
    <svg width="31" height="38" viewBox="0 0 31 38" aria-hidden="true">
      <path d="M0 3l8-2 5 5-3 8-3 2 10 6-2 4L3 17 0 27z" fill="#16306e" />
      <path d="M0 3l8-2 3 8-7 5-4-2z" fill="#0d1c48" />
      <path d="M7 16l10 6-2 4z" fill="#3a62b8" />
      <path d="M21 15h7l-3.500 4z" fill="#333" />
    </svg>
  </button>
);

/* ---------- left palettes ---------- */

const PaletteTitle = ({ children }: Kids) => (
  <div className="flex h-[18px] shrink-0 items-center justify-between bg-[#bfccdb] pr-[5px] pl-[2px] text-[#4a5a6a]">
    <h2 className="whitespace-nowrap">{children}</h2>
    <IconBtn label="Close palette">
      <Svg w={8} h={8}><path d="M.5.500l7 7M7.500.500l-7 7" stroke="#111" strokeWidth="1.500" /></Svg>
    </IconBtn>
  </div>
);

const GroupRow = ({ children }: Kids) => (
  <tr className="h-[18px] bg-[#dcdcdc] text-black">
    <th colSpan={3} className="p-0 pr-[7px] pl-[6px] font-normal">
      <div className="flex h-[18px] items-center justify-between leading-4">
        {children}
        <Svg w={6} h={8}><path d="M.5 3.500l2.500-2.500 2.500 2.500M.5 7l2.500-2.500L5.500 7" stroke="#111" strokeWidth="1.200" /></Svg>
      </div>
    </th>
  </tr>
);

const PropRow = ({ name, gray = false, extra, children }: Kids & { name: string; gray?: boolean; extra?: React.ReactNode }) => (
  <tr className={`h-[18px] bg-white leading-4 ${gray ? 'text-[#7a7a7a]' : 'text-black'}`}>
    <td className="border-b border-dotted border-[#777] p-0 pl-[10px] whitespace-nowrap">{name}</td>
    <td className="border-b border-l border-dotted border-[#777] p-0 pl-1 whitespace-nowrap">{children}</td>
    <td className="border-x border-b border-dotted border-[#777] p-0">{extra}</td>
  </tr>
);

const TypeGlyph = () => (
  <Svg>
    <path d="M.5 2L2 .5h5V7L5.500 8H.5zM9 2l1.500-1.500h5V7M.5 10L2 9h4.500v6H.5z" stroke="#999" />
    <path d="M8.500 6.500h7v9h-7zM10 9.500h2M10 12.500h4" stroke="#999" />
  </Svg>
);

const PropertiesPalette = () => (
  <section className="flex shrink-0 flex-col">
    <PaletteTitle>Properties</PaletteTitle>
    <div className="mt-[2px] border-t-2 border-r border-b border-t-[#757575] border-r-[#fafafa] border-b-[#d5d5d5] bg-[#f0f0f0]">
      <div className="mr-[18px] flex h-[71px] items-center justify-between border-r border-b border-[#d8d8d8] bg-linear-to-b from-white to-[#ececec] pr-px">
        <div className="flex h-[66px] w-[69px] border border-[#dedede] bg-linear-to-b from-[#ededed] to-[#cfcfcf]">
          <svg width="67" height="64" viewBox="0 0 67 64" aria-hidden="true">
            <path d="M22 10l12-6 10 14-2 8-6 1 16 18-3 5-22-17-3 16h-7z" fill="#bdbdbd" />
            <path d="M22 10l12-6 2 16-14 10z" fill="#b0b0b0" />
          </svg>
        </div>
        <Caret color="#888" />
      </div>
      <div className="flex h-[26px] items-center">
        <div className="relative">
          <select aria-label="Element filter" className="h-[22px] w-[228px] appearance-none rounded-xs border border-[#707070] bg-linear-to-b from-[#f2f2f2] to-[#d2d2d2] pl-[6px] text-black">
            <option>Lines (Hidden Lines) (1)</option>
          </select>
          <span className="pointer-events-none absolute top-[9px] right-[5px]"><Caret color="#000" /></span>
        </div>
        <button type="button" disabled className="ml-[6px] flex items-center gap-[5px] text-[#9a9a9a]"><TypeGlyph />Edit Type</button>
      </div>
      <div className="mr-[18px] flex h-[160px] overflow-hidden">
        <table className="w-[295px] shrink-0 table-fixed border-separate border-spacing-0 self-start text-left">
          <colgroup>
            <col className="w-[141px]" />
            <col className="w-[141px]" />
            <col className="w-[13px]" />
          </colgroup>
          <tbody>
            <GroupRow>Constraints</GroupRow>
            <PropRow name="Work Plane" gray>Level : Ground floor</PropRow>
            <GroupRow>Graphics</GroupRow>
            <PropRow
              name="Visible"
              gray
              extra={<button type="button" aria-label="Associate parameter" className="block h-[15px] w-[10px] rounded-xs border border-r-2 border-b-2 border-[#666] bg-[#e8e8e8] text-[9px] leading-3 text-black">=</button>}
            >
              <input type="checkbox" aria-label="Visible" disabled className="block size-[13px] appearance-none border border-[#aaa] bg-[#f4f4f4]" />
            </PropRow>
            <PropRow name="Visibility/Graphics Ove...">
              <button type="button" className="-ml-[2px] block h-4 w-[138px] rounded-xs border border-r-2 border-b-2 border-[#6e6e6e] bg-linear-to-b from-[#f5f5f5] to-[#d0d0d0] leading-3">Edit...</button>
            </PropRow>
            <GroupRow>Dimensions</GroupRow>
            <PropRow name="Length" gray>927.60</PropRow>
            <GroupRow>Identity Data</GroupRow>
            <PropRow name="Subcategory">Hidden Lines [projec...</PropRow>
          </tbody>
        </table>
        <div className="flex flex-1 flex-col items-center bg-[#f0f0f0] pl-px">
          <span className="flex h-[18px] items-center"><Svg w={6} h={4}><path d="M0 4h6L3 0z" fill="#444" stroke="none" /></Svg></span>
          <div className="flex h-[76px] w-[14px] flex-col items-center justify-center gap-[2px] rounded-xs border border-[#8a8a8a] bg-linear-to-r from-[#f7f7f7] to-[#c8c8cc]">
            <span className="h-px w-[6px] bg-[#555]" />
            <span className="h-px w-[6px] bg-[#555]" />
            <span className="h-px w-[6px] bg-[#555]" />
          </div>
          <span className="mt-auto flex h-4 items-center"><Caret /></span>
        </div>
      </div>
      <div className="flex h-[26px] items-center justify-between pr-5 pl-[2px]">
        <a href="#help" className="text-[#0a64c8] underline">Properties help</a>
        <button type="button" disabled className="h-[21px] w-[73px] rounded-xs border border-[#adb2b5] bg-[#f4f4f4] text-[12px] leading-4 text-[#8a8a8a]">Apply</button>
      </div>
    </div>
  </section>
);

const Expander = ({ open = false }: { open?: boolean }) => (
  <button type="button" aria-label={open ? 'Collapse' : 'Expand'} className="flex size-[9px] shrink-0 items-center justify-center border border-[#8f8f8f] bg-[#f4f4f4]">
    <Svg w={5} h={5}><path d={open ? 'M0 2.500h5' : 'M0 2.500h5M2.500 0v5'} stroke="#2b50a0" /></Svg>
  </button>
);

const Dots = ({ w = 'w-[9px]' }: { w?: string }) => <span className={`shrink-0 border-t border-dotted border-[#888] ${w}`} />;

const ViewsGlyph = () => (
  <Svg>
    <path d="M4 1.500H1.500V4M12 1.500h2.500V4M4 14.500H1.500V12M12 14.500h2.500V12" />
    <path d="M4.500 6l1.500-1.500h5.500v5.500L10 11.500H4.500z" fill="#e5e8ec" />
  </Svg>
);
const SheetsGlyph = () => (
  <Svg>
    <path d="M.5 1.500h11l4 4v8.500H.5z" fill="#eef0f3" />
    <path d="M2.500 4.500h7v6h-3v2M2.500 7v5h2V9h2M12.500 7v6" />
  </Svg>
);
const FamiliesGlyph = () => (
  <Svg>
    <path d="M1.500 1.500h6v7h-6zM10.500 1.500h4v13h-13v-3h9z" fill="#eef0f3" />
  </Svg>
);
const GroupsGlyph = () => (
  <Svg>
    <path d="M3 1.500H1.500v13H3M13 1.500h1.500v13H13" />
    <circle cx="7" cy="7" r="3.500" fill="#cdd3dc" />
    <path d="M6.500 6.500h5v5h-5z" fill="#e5e8ec" />
  </Svg>
);
const LinksGlyph = () => (
  <Svg>
    <rect x="1" y="5.500" width="8" height="5" rx="2.500" stroke="#c08a10" strokeWidth="2" />
    <rect x="7" y="5.500" width="8" height="5" rx="2.500" stroke="#e0aa20" strokeWidth="2" />
  </Svg>
);

const roots = [
  { name: 'Sheets (all)', icon: <SheetsGlyph />, plus: false },
  { name: 'Families', icon: <FamiliesGlyph />, plus: true },
  { name: 'Groups', icon: <GroupsGlyph />, plus: true },
  { name: 'Revit Links', icon: <LinksGlyph />, plus: false },
];

const ProjectBrowser = () => (
  <section className="mt-[4px] flex min-h-0 flex-1 flex-col">
    <PaletteTitle>Project Browser - M_Single-Flush.rfa</PaletteTitle>
    <ul className="mt-[2px] flex-1 overflow-hidden border-t-2 border-r border-b border-t-[#757575] border-r-[#ddd] border-b-[#ddd] bg-white pl-1 text-black">
      <li>
        <div className="flex h-[18px] items-center">
          <Expander open /><Dots w="w-[7px]" /><ViewsGlyph />
          <span className="ml-[2px] flex h-[18px] items-center bg-[#e2e2e2] px-1">Views (all)</span>
        </div>
        <ul className="ml-5">
          <li className="flex h-[18px] items-center gap-[1px]"><Expander open /><Dots /><span className="pl-[2px]">Floor Plans</span></li>
          <li className="flex h-[18px] items-center pl-6">
            <span className="-mt-2 h-[10px] w-[15px] border-b border-l border-dotted border-[#888]" />
            <b className="pl-[3px] font-bold">Ground floor</b>
          </li>
          {['Ceiling Plans', '3D Views', 'Elevations (Elevation 1)'].map((n) => (
            <li key={n} className="flex h-[18px] items-center gap-[1px]"><Expander /><Dots /><span className="pl-[2px]">{n}</span></li>
          ))}
        </ul>
      </li>
      {roots.map((r) => (
        <li key={r.name} className="flex h-[18px] items-center">
          {r.plus ? <Expander /> : <span className="w-[9px]" />}
          <Dots w="w-[7px]" />
          {r.icon}
          <span className="pl-[6px]">{r.name}</span>
        </li>
      ))}
    </ul>
  </section>
);

/* ---------- drawing windows ---------- */

const ViewBar = ({ second = false }: { second?: boolean }) => (
  <div className="flex h-[18px] shrink-0 items-center bg-[#f0f0f0] text-black">
    <button type="button" className={`shrink-0 text-left ${second ? 'w-[76px] pl-[27px]' : 'w-[55px] pl-[6px]'}`}>1 : 20</button>
    <IconBtn label="Detail level" className="w-[21px]"><BoxIcon hatch={!second} /></IconBtn>
    <IconBtn label="Visual style" className="w-[21px]"><CubeIcon /></IconBtn>
    <IconBtn label="Sun path" className="w-[21px]"><SunIcon gray={second} /></IconBtn>
    <IconBtn label="Shadows" className="w-[21px]"><ShadowIcon gray={second} /></IconBtn>
    <IconBtn label="Crop view" className="w-[21px]"><CropIcon /></IconBtn>
    <IconBtn label="Show crop region" className="w-[21px]"><CropIcon bulb /></IconBtn>
    <IconBtn label="Temporary hide" className="w-[21px]"><GlassesIcon /></IconBtn>
    <IconBtn label="Reveal hidden" className="w-[21px]"><BulbIcon gray={second} /></IconBtn>
    <IconBtn label="Temporary view" className="w-[21px]"><TempViewIcon gray={second} /></IconBtn>
    <IconBtn label="Analytical model" className="w-[21px]"><AnalyticIcon gray={second} /></IconBtn>
    <div className={`flex h-full flex-1 items-center bg-[#ebebeb] pl-[6px] ${second ? 'gap-[106px]' : 'justify-between pr-[18px]'}`}>
      <Svg w={5} h={8}><path d="M5 0L0 4l5 4z" fill="#333" stroke="none" /></Svg>
      <span className="h-[15px] w-[15px] rounded-xs border border-[#999] bg-linear-to-b from-[#f5f5f5] to-[#cfcfcf]" />
      {!second && <Svg w={5} h={8}><path d="M0 0l5 4-5 4z" fill="#333" stroke="none" /></Svg>}
    </div>
  </div>
);

const LevelDrawing = () => (
  <svg width="433" height="386" viewBox="329 193 433 386" fill="none" stroke="#000" className="block shrink-0" role="img" aria-label="Door in level 1 plan">
    <path d="M329 293h137v46H329" strokeWidth="2" />
    <path d="M465.500 339v210.500h12.500V339M466 339.500h12" />
    <path d="M675 340v16l-2 24-12 37-18 36-24 31-31 27-34 20-35 12-41 6" />
    <g stroke="#0a0af0" strokeDasharray="14 15" strokeDashoffset="4">
      <path d="M466 293.500h209M466 339.500h209" />
      <path d="M466 293.500l104.500 23M675 293.500l-104.500 23M466 339.500l104.500-23M675 339.500l-104.500-23" />
    </g>
  </svg>
);

const LevelWindow = () => (
  <section className="absolute top-[23px] left-0 flex h-[444px] w-[443px] flex-col border-t border-b border-[#5c5c5c] bg-[#d6e3f0]">
    <div className="flex h-[30px] shrink-0 items-center border-b border-[#7d8790] bg-linear-to-b from-[#bccbda] to-[#d8e4f0] pt-[6px] whitespace-nowrap text-[#333]">Floor Plan: Level 1 - Project1</div>
    <div className="flex min-h-0 flex-1 bg-white">
      <div className="min-w-0 flex-1 overflow-hidden"><LevelDrawing /></div>
      <div className="flex w-[10px] flex-col items-center bg-[#ececec] pt-[185px]">
        <span className="h-[15px] w-[9px] border border-[#999] bg-[#f4f4f4]" />
        <span className="mt-auto pb-1"><Caret /></span>
      </div>
    </div>
    <ViewBar />
    <div className="h-[8px] shrink-0 border-t border-white" />
  </section>
);

const tick = (x: number, y: number) => `M${x - 5} ${y + 5}l10 -10`;

const FamilyDrawing = () => (
  <svg width="497" height="421" viewBox="782 225 497 421" fill="none" stroke="#000" className="block shrink-0 font-['Liberation_Sans',Arial,sans-serif] text-[13px]" role="img" aria-label="Ground floor door family plan">
    <path d="M957 474.500H789.500v30H957M1139 474.500h140M1139 504.500h140M1146 484.500h133M902 469.500h55M905 509.500h30" />
    <g stroke="#0c780c" strokeDasharray="9 9">
      <path d="M776 489.500h503" />
      <path d="M956.500 286v340M1047.500 241v405M1139.500 514v116" />
    </g>
    <path d="M1139.500 291v213M956.500 474v30" />
    <path d="M1139.500 286v230" stroke="#0c780c" strokeDasharray="9 9" />
    <path d={`M956.500 254.500h183M956.500 246v32M1139.500 226v52M1128.500 226v32M1128.500 227.500h11M1047.500 250v10${tick(957, 254)}${tick(1047, 254)}${tick(1139, 254)}${tick(1129, 228)}${tick(1139, 228)}`} />
    <path d={`M956.500 640.500h183M956.500 625v20M1139.500 625v20${tick(957, 640)}${tick(1139, 640)}`} />
    <path d="M1139 291.500h-10.500v182M1128 291.500l-35 6-30 11-31 18-25 21-23 30-15 29-7 24-5 23v21" />
    <path d="M941.500 474v-4.500H957M941.500 505v4.500H957M1139 469.500h15v4.500M1139 509.500h15V505M957 484.500h182M957 504.500h182M957 504l182-30" stroke="#777" />
    <path d="M943 441l196 33" stroke="#86a8f5" />
    <path d="M957 474.500h182" stroke="#2aa5d8" strokeDasharray="9 3" />
    <path d="M957 474l182 30" stroke="#0b3bb5" />
    <path d="M1048 474l34-34" stroke="#555" />
    <path d={`M1086.500 420v30M1090 441.500h50${tick(1139, 441)}${tick(1090, 441)}`} />
    <path d="M1077.500 438v-3a4 4 0 018 0v3" stroke="#1d6fa5" strokeWidth="1.500" />
    <path d="M1076 437.500h11v8h-11z" fill="#9ff0f5" stroke="#1d6fa5" />
    <path d="M881.500 469v10M878 475l6-5M905.500 504v8M903 504l6 8M1175 474l5 5M1254.500 474v15M1255 474l5 6M1255 484l5 5M1252 474.500h10" />
    <path d="M932 439l-4 33M926 439l16 2M924 471l16 1" stroke="#86a8f5" />
    <path d="M938.500 452v8M932.500 449v5M944.500 449v5M932.500 458v5M944.500 458v5M932 451.500h13M932 460.500h13" stroke="#1a3f96" />
    <path d="M1010.500 377v14M1015.500 377v14M1007 387l3.500 4 2.500-3M1019 381l-3.500-4-2.500 3M1080 380.500h14M1080 386.500h14M1084 377l-4 3.500 3 2.500M1090 390l4-3.500-3-2.500" stroke="#1010e0" />
    <g fill="#5f9ae0" stroke="#27548f">
      <circle cx="943.500" cy="441.500" r="2.500" />
      <circle cx="938.500" cy="471.500" r="2.500" />
      <circle cx="956.500" cy="474.500" r="4" />
      <circle cx="1139.500" cy="504.500" r="4" />
    </g>
    <g fill="#fff" stroke="none">
      <path d="M861 390h15v161h-15zM886 430h14v155h-14zM1235 425h16v110h-16z" />
    </g>
    <g fill="#000" stroke="none" textAnchor="middle">
      <text x="1000" y="248">EQ</text>
      <text x="1092" y="248">EQ</text>
      <text x="1112" y="435" fontSize="12">261.91</text>
      <text x="1046" y="634">Width = 915.00</text>
      <text transform="translate(874 471) rotate(-90)">Trim Projection Ext = 25.00</text>
      <text transform="translate(898 507) rotate(-90)">Trim Projection Int = 25.00</text>
      <text transform="translate(1170 475) rotate(-90)">0.00</text>
      <text transform="translate(1248 480) rotate(-90)">Thickness = 51.00</text>
      <text transform="translate(922 450) rotate(-81)" fontSize="14" fill="#1a4ba8">150.33</text>
    </g>
  </svg>
);

const FamilyWindow = () => (
  <section className="absolute top-[55px] right-0 left-[443px] flex h-[479px] flex-col border-t border-b border-l border-black bg-[#b9d0ea]">
    <div className="flex h-[30px] shrink-0 items-center border-b border-[#6f7f92] bg-linear-to-b from-[#93b0d0] to-[#b9d1ec] pt-1 pl-[29px] text-black">
      <h2 className="flex-1 text-[12px] whitespace-nowrap">Floor Plan: Ground floor - M_Single-Flush.rfa</h2>
      <button type="button" aria-label="Minimize window" className="flex h-4 w-[31px] items-center justify-center rounded-xs border border-[#5f7899] bg-linear-to-b from-[#d4e3f4] to-[#a9c2df]">
        <span className="mt-1 h-[5px] w-[11px] border border-[#555] bg-white" />
      </button>
      <button type="button" aria-label="Maximize window" className="ml-[2px] h-4 w-[11px] rounded-l-xs border border-r-0 border-[#5f7899] bg-linear-to-b from-[#d4e3f4] to-[#a9c2df]" />
    </div>
    <div className="ml-2 flex min-h-0 flex-1 flex-col border-l border-[#6f7f92] bg-white">
      <div className="min-h-0 flex-1 overflow-hidden"><FamilyDrawing /></div>
      <ViewBar second />
    </div>
    <div className="h-[9px] shrink-0 border-t border-b border-t-white border-b-[#27b8d0]" />
  </section>
);

const arrows = [
  [817, 239, 983, 501],
  [822, 220, 986, 480],
  [823, 216, 1025, 506],
  [831, 218, 1032, 474],
];

const RedArrows = () => (
  <svg width="240" height="310" viewBox="805 206 240 310" className="pointer-events-none absolute top-[206px] left-[805px] z-40" aria-hidden="true">
    {arrows.map(([x1, y1, x2, y2]) => {
      const len = Math.hypot(x2 - x1, y2 - y1);
      const ux = (x2 - x1) / len;
      const uy = (y2 - y1) / len;
      const bx = x2 - ux * 15;
      const by = y2 - uy * 15;
      return (
        <g key={x2}>
          <line x1={x1} y1={y1} x2={bx} y2={by} stroke="#f00" strokeWidth="2" />
          <polygon points={`${x2},${y2} ${bx - uy * 7},${by + ux * 7} ${bx + uy * 7},${by - ux * 7}`} fill="#f00" />
        </g>
      );
    })}
  </svg>
);

export default function App() {
  return (
    <div className="relative flex h-screen min-h-[680px] flex-col overflow-hidden bg-[#f0f0f0] font-['Open_Sans','Noto_Sans',sans-serif] text-[11px] select-none">
      <header className="relative z-20 shrink-0">
        <AppButton />
        <TitleBar />
        <TabRow />
        <Ribbon />
      </header>
      <div className="flex min-h-0 flex-1">
        <aside className="-ml-2 flex w-[335px] shrink-0 flex-col pt-px pr-[5px]">
          <PropertiesPalette />
          <ProjectBrowser />
        </aside>
        <main className="relative mt-[2px] min-w-0 flex-1 overflow-hidden border-t border-l-2 border-[#6c6c6c] bg-[#ababab]">
          <LevelWindow />
          <FamilyWindow />
        </main>
      </div>
      <footer className="h-[6px] shrink-0 bg-[#d8e3cf]" />
      <RedArrows />
    </div>
  );
}
